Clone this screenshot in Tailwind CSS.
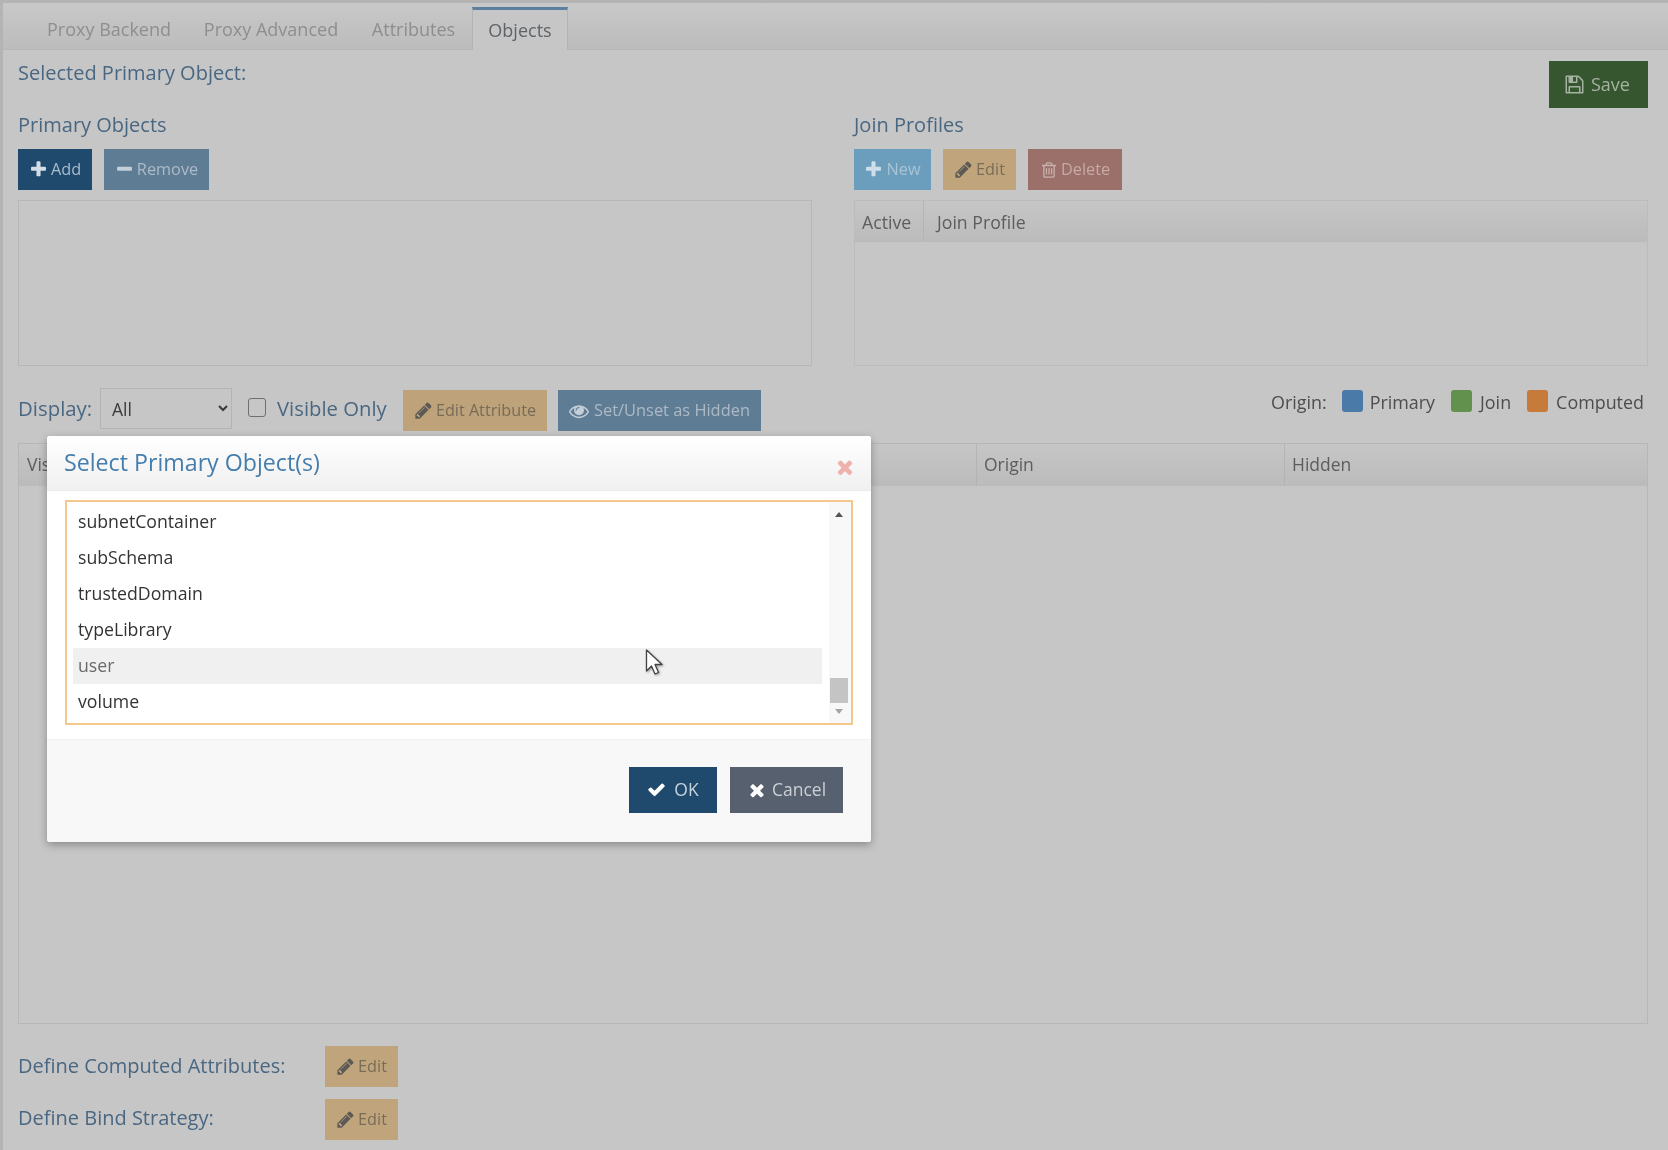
<!DOCTYPE html>
<html lang="en">

<head>
    <meta charset="UTF-8">
    <meta name="viewport" content="width=device-width, initial-scale=1.0">
    <title>Objects</title>
    <script src="https://cdn.jsdelivr.net/npm/@tailwindcss/browser@4"></script>
</head>

<body class="bg-[#c6c6c6]">
    <div class="relative w-[1668px] h-[1150px] overflow-hidden bg-[#c6c6c6] border-t-[3px] border-l-[3px] border-[#b4b4b4] font-['Open_Sans',sans-serif] blur-[0.6px]">

        <!-- tabs -->
        <div class="h-[47px] flex items-end pl-[28px] bg-gradient-to-b from-[#c8c8c8] to-[#bcbcbc] border-b border-[#b6b6b6] text-[18px] text-[#8e8e8e]">
            <a class="w-[156px] h-[42px] pt-[3px] flex items-center justify-center">Proxy Backend</a>
            <a class="w-[168px] h-[42px] pt-[3px] flex items-center justify-center">Proxy Advanced</a>
            <a class="w-[117px] h-[42px] pt-[3px] flex items-center justify-center">Attributes</a>
            <a class="w-[96px] h-[43px] -mb-px flex items-center justify-center bg-[#c6c6c6] border-t-[3px] border-x border-t-[#5b7f9e] border-x-[#b4b4b4] text-[#5f6468]">Objects</a>
        </div>

        <div class="pl-[15px] pr-[20px]">
            <!-- selected object + save -->
            <div class="h-[62px] flex justify-between items-start">
                <div class="mt-[9px] text-[20px] leading-[28px] text-[#4a6782]">Selected Primary Object:</div>
                <button class="mt-[11px] w-[99px] h-[47px] pr-[3px] flex items-center justify-center gap-[6px] bg-[#365630] text-[18px] text-[#a5b2a1]">
                    <svg class="w-[21px] h-[21px]" viewBox="0 0 1792 1792" fill="currentColor"><path d="M512 1536h768v-384h-768v384zm896 0h128v-896q0-14-10-38.500t-20-34.500l-281-281q-10-10-34-20t-39-10v416q0 40-28 68t-68 28h-576q-40 0-68-28t-28-68v-416h-128v1280h128v-416q0-40 28-68t68-28h832q40 0 68 28t28 68v416zm-384-928v-320q0-13-9.500-22.500t-22.500-9.500h-192q-13 0-22.500 9.500t-9.500 22.500v320q0 13 9.500 22.500t22.500 9.500h192q13 0 22.500-9.500t9.500-22.500zm640 32v928q0 40-28 68t-68 28h-1344q-40 0-68-28t-28-68v-1344q0-40 28-68t68-28h928q40 0 88 20t76 48l280 280q28 28 48 76t20 88z"/></svg>
                    Save
                </button>
            </div>

            <!-- primary objects / join profiles -->
            <div class="grid grid-cols-2 gap-[42px]">
                <div>
                    <div class="h-[26px] text-[20px] leading-[26px] text-[#4a6782]">Primary Objects</div>
                    <div class="mt-[11px] flex gap-[12px] text-[16.3px]">
                        <button class="w-[74px] h-[41px] flex items-center justify-center gap-[3px] bg-[#1f4a6e] text-[#a9bccb]">
                            <svg class="w-[19px] h-[19px] text-[#d3dde5]" viewBox="0 0 1792 1792" fill="currentColor"><path d="M1600 736v192q0 40-28 68t-68 28h-416v416q0 40-28 68t-68 28h-192q-40 0-68-28t-28-68v-416h-416q-40 0-68-28t-28-68v-192q0-40 28-68t68-28h416v-416q0-40 28-68t68-28h192q40 0 68 28t28 68v416h416q40 0 68 28t28 68z"/></svg>
                            Add
                        </button>
                        <button class="w-[105px] h-[41px] flex items-center justify-center gap-[3px] bg-[#5f7c95] text-[#acbac6]">
                            <svg class="w-[19px] h-[19px] text-[#c3ced7]" viewBox="0 0 1792 1792" fill="currentColor"><path d="M1600 736v192q0 40-28 68t-68 28h-1216q-40 0-68-28t-28-68v-192q0-40 28-68t68-28h1216q40 0 68 28t28 68z"/></svg>
                            Remove
                        </button>
                    </div>
                    <div class="mt-[10px] h-[166px] border border-[#b7b7b7]"></div>
                </div>
                <div>
                    <div class="h-[26px] text-[20px] leading-[26px] text-[#4a6782]">Join Profiles</div>
                    <div class="mt-[11px] flex gap-[12px] text-[16.3px]">
                        <button class="w-[77px] h-[41px] flex items-center justify-center gap-[3px] bg-[#6b9dbd] text-[#a9c4d5]">
                            <svg class="w-[19px] h-[19px] text-[#cfdfe9]" viewBox="0 0 1792 1792" fill="currentColor"><path d="M1600 736v192q0 40-28 68t-68 28h-416v416q0 40-28 68t-68 28h-192q-40 0-68-28t-28-68v-416h-416q-40 0-68-28t-28-68v-192q0-40 28-68t68-28h416v-416q0-40 28-68t68-28h192q40 0 68 28t28 68v416h416q40 0 68 28t28 68z"/></svg>
                            New
                        </button>
                        <button class="w-[73px] h-[41px] flex items-center justify-center gap-[3px] bg-[#c0a57c] text-[#786c58]">
                            <svg class="w-[19px] h-[19px] text-[#5d5a55]" viewBox="0 0 1792 1792" fill="currentColor"><path d="M491 1536l91-91-235-235-91 91v107h128v128h107zm523-928q0-22-22-22-10 0-17 7l-542 542q-7 7-7 17 0 22 22 22 10 0 17-7l542-542q7-7 7-17zm-54-192l416 416-832 832h-416v-416zm683 96q0 53-37 90l-166 166-416-416 166-165q36-38 90-38 53 0 91 38l235 234q37 39 37 91z"/></svg>
                            Edit
                        </button>
                        <button class="w-[94px] h-[41px] flex items-center justify-center gap-[3px] bg-[#9b6f6a] text-[#c6aaa6]">
                            <svg class="w-[18px] h-[18px] text-[#c9b1ad]" viewBox="0 0 1792 1792" fill="currentColor"><path d="M704 736v576q0 14-9 23t-23 9h-64q-14 0-23-9t-9-23v-576q0-14 9-23t23-9h64q14 0 23 9t9 23zm256 0v576q0 14-9 23t-23 9h-64q-14 0-23-9t-9-23v-576q0-14 9-23t23-9h64q14 0 23 9t9 23zm256 0v576q0 14-9 23t-23 9h-64q-14 0-23-9t-9-23v-576q0-14 9-23t23-9h64q14 0 23 9t9 23zm128 724v-948h-896v948q0 22 7 40.500t14.500 27 10.500 8.500h832q3 0 10.500-8.500t14.500-27 7-40.500zm-672-1076h448l-48-117q-7-9-17-11h-317q-10 2-17 11zm928 32v64q0 14-9 23t-23 9h-96v948q0 83-47 143.500t-113 60.500h-832q-66 0-113-58.500t-47-141.500v-952h-96q-14 0-23-9t-9-23v-64q0-14 9-23t23-9h309l70-167q15-37 54-63t79-26h320q40 0 79 26t54 63l70 167h309q14 0 23 9t9 23z"/></svg>
                            Delete
                        </button>
                    </div>
                    <div class="mt-[10px] h-[166px] border border-[#bcbcbc]">
                        <div class="h-[41px] flex bg-gradient-to-b from-[#c6c6c6] to-[#bbbbbb] text-[17.7px] text-[#5d5d5d]">
                            <div class="w-[69px] pl-[7px] pt-[2px] flex items-center border-r border-[#b4b4b4]">Active</div>
                            <div class="pl-[13px] pt-[2px] flex items-center">Join Profile</div>
                        </div>
                    </div>
                </div>
            </div>

            <!-- display filter + legend -->
            <div class="mt-[22px] h-[43px] flex justify-between">
                <div class="flex items-center">
                    <div class="w-[82px] -mt-[2px] text-[20.4px] text-[#4a6782]">Display:</div>
                    <select class="w-[132px] h-[41px] -mt-[2px] pl-[7px] bg-[#c6c6c6] border border-[#b4b4b4] text-[17.5px] text-[#3a3a3a]">
                        <option>All</option>
                    </select>
                    <input type="checkbox" class="appearance-none ml-[16px] -mt-[4px] w-[18px] h-[19px] border border-[#6f6f6f] rounded-[3px]">
                    <div class="ml-[11px] w-[126px] -mt-[3px] text-[20.3px] text-[#4a6782]">Visible Only</div>
                    <button class="w-[144px] h-[41px] mt-[2px] flex items-center justify-center gap-[3px] bg-[#bda27a] text-[16.2px] text-[#786c58]">
                        <svg class="w-[19px] h-[19px] text-[#5d5a55]" viewBox="0 0 1792 1792" fill="currentColor"><path d="M491 1536l91-91-235-235-91 91v107h128v128h107zm523-928q0-22-22-22-10 0-17 7l-542 542q-7 7-7 17 0 22 22 22 10 0 17-7l542-542q7-7 7-17zm-54-192l416 416-832 832h-416v-416zm683 96q0 53-37 90l-166 166-416-416 166-165q36-38 90-38 53 0 91 38l235 234q37 39 37 91z"/></svg>
                        Edit Attribute
                    </button>
                    <button class="ml-[11px] w-[203px] h-[41px] mt-[2px] flex items-center justify-center gap-[5px] bg-[#5f7c95] text-[16.4px] text-[#acbac6]">
                        <svg class="w-[20px] h-[20px] text-[#c3ced7]" viewBox="0 0 1792 1792" fill="currentColor"><path d="M1664 960q-152-236-381-353 61 104 61 225 0 185-131.500 316.500t-316.500 131.500-316.500-131.500-131.500-316.500q0-121 61-225-229 117-381 353 133 205 333.500 326.500t434.500 121.500 434.500-121.500 333.500-326.500zm-720-384q0-20-14-34t-34-14q-125 0-214.500 89.500t-89.500 214.500q0 20 14 34t34 14 34-14 14-34q0-86 61-147t147-61q20 0 34-14t14-34zm848 384q0 34-20 69-140 230-376.500 368.500t-499.500 138.500-499.500-139-376.500-368q-20-35-20-69t20-69q140-229 376.500-368t499.500-139 499.500 139 376.500 368q20 35 20 69z"/></svg>
                        Set/Unset as Hidden
                    </button>
                </div>
                <div class="flex items-start pr-[4px] pt-[2px] text-[17.9px] leading-[24px] text-[#4d4d4d]">
                    <span>Origin:</span>
                    <span class="ml-[15px] w-[21px] h-[22px] rounded-[3px] bg-[#4a7aa8]"></span>
                    <span class="ml-[7px]">Primary</span>
                    <span class="ml-[16px] w-[21px] h-[22px] rounded-[3px] bg-[#61914c]"></span>
                    <span class="ml-[8px]">Join</span>
                    <span class="ml-[16px] w-[21px] h-[22px] rounded-[3px] bg-[#c67b3a]"></span>
                    <span class="ml-[8px]">Computed</span>
                </div>
            </div>

            <!-- attribute table -->
            <div class="mt-[12px] h-[581px] border border-[#b7b7b7]">
                <div class="h-[42px] flex bg-gradient-to-b from-[#c6c6c6] to-[#bbbbbb] text-[17.5px] text-[#5d5d5d]">
                    <div class="w-[957px] pl-[8px] pb-[1px] flex items-center">Visible</div>
                    <div class="w-[308px] pl-[7px] pb-[1px] flex items-center border-l border-[#b4b4b4]">Origin</div>
                    <div class="pl-[7px] pb-[1px] flex items-center border-l border-[#b4b4b4]">Hidden</div>
                </div>
            </div>

            <!-- bottom rows -->
            <div class="mt-[22px] flex items-center">
                <div class="w-[307px] -mt-[2px] text-[20px] text-[#4a6782]">Define Computed Attributes:</div>
                <button class="w-[73px] h-[41px] flex items-center justify-center gap-[3px] bg-[#c0a57c] text-[16.3px] text-[#786c58]">
                    <svg class="w-[19px] h-[19px] text-[#5d5a55]" viewBox="0 0 1792 1792" fill="currentColor"><path d="M491 1536l91-91-235-235-91 91v107h128v128h107zm523-928q0-22-22-22-10 0-17 7l-542 542q-7 7-7 17 0 22 22 22 10 0 17-7l542-542q7-7 7-17zm-54-192l416 416-832 832h-416v-416zm683 96q0 53-37 90l-166 166-416-416 166-165q36-38 90-38 53 0 91 38l235 234q37 39 37 91z"/></svg>
                    Edit
                </button>
            </div>
            <div class="mt-[12px] flex items-center">
                <div class="w-[307px] -mt-[4px] text-[20px] text-[#4a6782]">Define Bind Strategy:</div>
                <button class="w-[73px] h-[41px] flex items-center justify-center gap-[3px] bg-[#c0a57c] text-[16.3px] text-[#786c58]">
                    <svg class="w-[19px] h-[19px] text-[#5d5a55]" viewBox="0 0 1792 1792" fill="currentColor"><path d="M491 1536l91-91-235-235-91 91v107h128v128h107zm523-928q0-22-22-22-10 0-17 7l-542 542q-7 7-7 17 0 22 22 22 10 0 17-7l542-542q7-7 7-17zm-54-192l416 416-832 832h-416v-416zm683 96q0 53-37 90l-166 166-416-416 166-165q36-38 90-38 53 0 91 38l235 234q37 39 37 91z"/></svg>
                    Edit
                </button>
            </div>
        </div>

        <!-- select primary objects dialog -->
        <div class="absolute left-[44px] top-[433px] w-[824px] h-[406px] flex flex-col rounded-[3px] bg-white shadow-[0_3px_8px_rgba(0,0,0,0.3)]">
            <div class="h-[55px] shrink-0 flex justify-between rounded-t-[3px] bg-gradient-to-b from-white to-[#f0f0f0] border-b border-[#ececec] pl-[17px] pr-[15px]">
                <div class="mt-[11px] text-[23.2px] leading-[30px] text-[#457dad]">Select Primary Object(s)</div>
                <svg class="mt-[20px] w-[22px] h-[22px] text-[#eeb1ad]" viewBox="0 0 1792 1792" fill="currentColor"><path d="M1490 1322q0 40-28 68l-136 136q-28 28-68 28t-68-28l-294-294-294 294q-28 28-68 28t-68-28l-136-136q-28-28-28-68t28-68l294-294-294-294q-28-28-28-68t28-68l136-136q28-28 68-28t68 28l294 294 294-294q28-28 68-28t68 28l136 136q28 28 28 68t-28 68l-294 294 294 294q28 28 28 68z"/></svg>
            </div>
            <div class="h-[248px] shrink-0 px-[18px] pt-[9px]">
                <div class="relative h-[225px] flex border-2 border-[#f4c78d]">
                    <div class="flex-1 pl-[6px] pr-[7px] pt-[2px] text-[17.7px] text-[#333]">
                        <div class="h-[36px] pl-[5px] pb-[2px] flex items-center">subnetContainer</div>
                        <div class="h-[36px] pl-[5px] pb-[2px] flex items-center">subSchema</div>
                        <div class="h-[36px] pl-[5px] pb-[2px] flex items-center">trustedDomain</div>
                        <div class="h-[36px] pl-[5px] pb-[2px] flex items-center">typeLibrary</div>
                        <div class="h-[36px] pl-[5px] pb-[2px] flex items-center bg-[#f0f0f0] text-[#6a6a6a]">user</div>
                        <div class="h-[36px] pl-[5px] pb-[2px] flex items-center">volume</div>
                    </div>
                    <!-- scrollbar -->
                    <div class="w-[22px] shrink-0 flex flex-col items-center justify-between bg-[#f8f8f8] pt-[10px] pb-[9px] pr-[3px]">
                        <div class="w-0 h-0 border-x-[4px] border-x-transparent border-b-[5px] border-b-[#555]"></div>
                        <div class="flex-1"></div>
                        <div class="w-[18px] h-[25px] bg-[#c4c4c4]"></div>
                        <div class="mt-[6px] w-0 h-0 border-x-[4px] border-x-transparent border-t-[5px] border-t-[#a4a4a4]"></div>
                    </div>
                </div>
            </div>
            <div class="flex-1 flex justify-end items-start gap-[13px] pt-[27px] pr-[28px] bg-[#f8f8f8] border-t border-[#f0f0f0] rounded-b-[3px] text-[17.5px]">
                <button class="w-[88px] h-[46px] pb-[1px] flex items-center justify-center gap-[8px] bg-[#1f4a6e] text-[#c8d3dc]">
                    <svg class="w-[19px] h-[19px] text-white" viewBox="0 0 1792 1792" fill="currentColor"><path d="M1671 566q0 40-28 68l-724 724-136 136q-28 28-68 28t-68-28l-136-136-362-362q-28-28-28-68t28-68l136-136q28-28 68-28t68 28l294 295 656-657q28-28 68-28t68 28l136 136q28 28 28 68z"/></svg>
                    OK
                </button>
                <button class="w-[113px] h-[46px] pb-[1px] flex items-center justify-center gap-[5px] bg-[#56606e] text-[#ccd0d5]">
                    <svg class="w-[20px] h-[20px] text-white" viewBox="0 0 1792 1792" fill="currentColor"><path d="M1490 1322q0 40-28 68l-136 136q-28 28-68 28t-68-28l-294-294-294 294q-28 28-68 28t-68-28l-136-136q-28-28-28-68t28-68l294-294-294-294q-28-28-28-68t28-68l136-136q28-28 68-28t68 28l294 294 294-294q28-28 68-28t68 28l136 136q28 28 28 68t-28 68l-294 294 294 294q28 28 28 68z"/></svg>
                    Cancel
                </button>
            </div>
        </div>

        <!-- mouse pointer -->
        <svg class="absolute left-[642px] top-[646px] w-[20px] h-[28px] drop-shadow-[1px_1px_1px_rgba(0,0,0,0.35)]" viewBox="0 0 20 28">
            <path d="M1.500 1v21l5-5 3.500 8 3.500-1.500-3.500-8h7z" fill="#fff" stroke="#444" stroke-width="1.300" stroke-linejoin="round"/>
        </svg>
    </div>
</body>

</html>
